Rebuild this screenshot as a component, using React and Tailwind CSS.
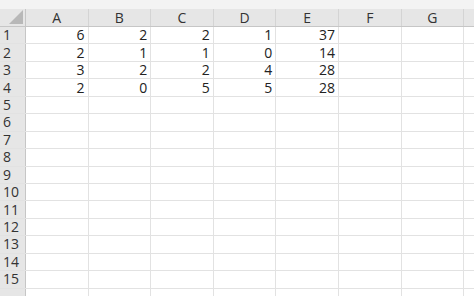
import React from "react";

const cols = ["A", "B", "C", "D", "E", "F", "G", ""];
const data = [
  [6, 2, 2, 1, 37],
  [2, 1, 1, 0, 14],
  [3, 2, 2, 4, 28],
  [2, 0, 5, 5, 28],
];

export default function App() {
  const rows = Array.from({ length: 16 }, (_, i) => i + 1);
  return (
    <div
      className="w-[474px] h-[296px] overflow-hidden bg-white text-[#222] text-[14px]"
      style={{ fontFamily: '"Open Sans", "Noto Sans", sans-serif' }}
    >
      <div className="h-[9px] bg-[#f3f3f3]" />
      <div className="flex h-[18px] bg-[#e6e6e6] border-b border-[#c6c6c6]">
        <div className="w-[26px] shrink-0 relative border-r border-[#c6c6c6]">
          <svg className="absolute right-[2px] bottom-[2px]" width="14" height="14" viewBox="0 0 14 14">
            <polygon points="14,0 14,14 0,14" fill="#b8b8b8" />
          </svg>
        </div>
        {cols.map((c, i) => (
          <div
            key={i}
            className="w-[62.6px] shrink-0 border-r border-[#d4d4d4] flex items-center justify-center leading-none text-[#333]"
          >
            {c}
          </div>
        ))}
      </div>
      {rows.map((r) => (
        <div key={r} className="flex h-[17.45px] border-b border-[#e2e2e2]">
          <div className="w-[26px] shrink-0 bg-[#e6e6e6] border-r border-[#c6c6c6] flex items-center pl-[3px] leading-none text-[#333]">
            {r <= 15 ? r : ""}
          </div>
          {cols.map((c, i) => (
            <div
              key={i}
              className="w-[62.6px] shrink-0 border-r border-[#e2e2e2] flex items-center justify-end pr-[3px] leading-none"
            >
              {data[r - 1] && data[r - 1][i] !== undefined ? data[r - 1][i] : ""}
            </div>
          ))}
        </div>
      ))}
    </div>
  );
}
